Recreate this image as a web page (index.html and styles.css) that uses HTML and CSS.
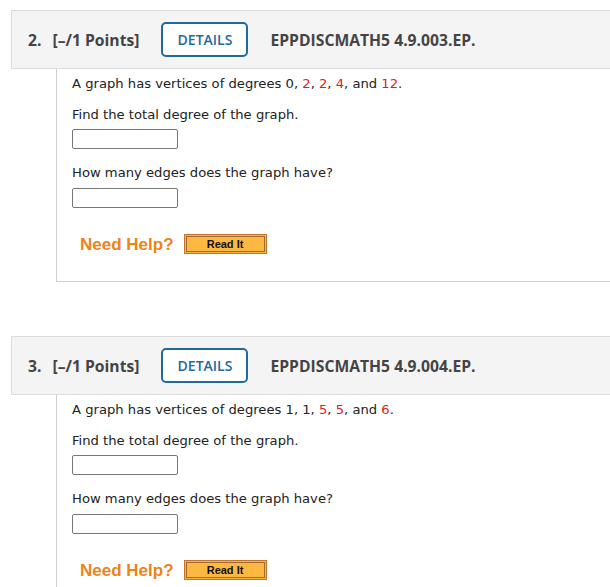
FILE: index.html
```html
<!DOCTYPE html>
<html>
<head>
<meta charset="utf-8">
<link rel="stylesheet" href="styles.css">
</head>
<body>
<div class="page">
  <section class="question">
    <div class="q-header">
      <span class="q-num">2.</span>
      <span class="q-points">[–/1 Points]</span>
      <span class="details-btn">DETAILS</span>
      <span class="q-code">EPPDISCMATH5 4.9.003.EP.</span>
    </div>
    <div class="q-body">
      <p class="q-line first">A graph has vertices of degrees 0, <span class="num">2</span>, <span class="num">2</span>, <span class="num">4</span>, and <span class="num">12</span>.</p>
      <p class="q-line">Find the total degree of the graph.</p>
      <div class="answer"></div>
      <p class="q-line after">How many edges does the graph have?</p>
      <div class="answer last"></div>
      <div class="help-row">
        <span class="need-help">Need Help?</span>
        <span class="read-it"><span class="read-it-inner">Read It</span></span>
      </div>
    </div>
  </section>
  <section class="question">
    <div class="q-header">
      <span class="q-num">3.</span>
      <span class="q-points">[–/1 Points]</span>
      <span class="details-btn">DETAILS</span>
      <span class="q-code">EPPDISCMATH5 4.9.004.EP.</span>
    </div>
    <div class="q-body">
      <p class="q-line first">A graph has vertices of degrees 1, 1, <span class="num">5</span>, <span class="num">5</span>, and <span class="num">6</span>.</p>
      <p class="q-line">Find the total degree of the graph.</p>
      <div class="answer"></div>
      <p class="q-line after">How many edges does the graph have?</p>
      <div class="answer last"></div>
      <div class="help-row">
        <span class="need-help">Need Help?</span>
        <span class="read-it"><span class="read-it-inner">Read It</span></span>
      </div>
    </div>
  </section>
</div>
</body>
</html>
```

FILE: styles.css
```css
html, body {
  margin: 0;
  padding: 0;
  background: #fff;
  overflow: hidden;
}

.page {
  padding: 10px 0 0 11px;
}

.question {
  margin-bottom: 54px;
}

.q-header {
  display: flex;
  align-items: center;
  height: 57px;
  border: 1px solid #dcdcdc;
  border-right: none;
  background: #f4f4f4;
  padding-left: 16px;
  font-family: "Open Sans", "DejaVu Sans", sans-serif;
  font-weight: 700;
  font-size: 15.7px;
  color: #444;
}

.q-num {
  margin-right: 11px;
}

.q-points {
  margin-right: 22px;
}

.details-btn {
  box-sizing: border-box;
  width: 87px;
  height: 35px;
  border: 2px solid #1f6aa0;
  border-radius: 5px;
  display: flex;
  align-items: center;
  justify-content: center;
  color: #1f6aa0;
  font-weight: 600;
  font-size: 14px;
  margin-right: 22px;
  background: #fff;
}

.q-body {
  margin-left: 45px;
  border-left: 1px solid #cfcfcf;
  border-bottom: 1px solid #cfcfcf;
  padding: 5px 0 27px 15px;
  font-family: "DejaVu Sans", Verdana, sans-serif;
  font-size: 13.15px;
  color: #222;
}

.q-line {
  margin: 11px 0 0 0;
  line-height: 20px;
}

.q-line.first {
  margin-top: 0;
}

.q-line.after {
  margin-top: 14px;
}

.num {
  color: #e21b1b;
}

.answer {
  box-sizing: border-box;
  width: 106px;
  height: 20px;
  border: 1px solid #777;
  border-radius: 2px;
  margin-top: 4px;
  background: #fff;
}

.answer.last {
  margin-top: 5px;
}

.help-row {
  display: flex;
  align-items: center;
  margin: 26px 0 0 8px;
  height: 20px;
}

.need-help {
  font-family: "Liberation Sans", Arial, sans-serif;
  font-weight: 700;
  font-size: 17px;
  line-height: 20px;
  color: #ec8417;
  margin-right: 10px;
  position: relative;
  top: 1px;
}

.read-it {
  box-sizing: border-box;
  width: 83px;
  height: 20px;
  border: 1px solid #c2782c;
  background: #fcb23c;
  padding: 1px;
  display: flex;
}

.read-it-inner {
  flex: 1;
  border: 1px solid #a86a2c;
  background: #fdb843;
  display: flex;
  align-items: center;
  justify-content: center;
  font-family: "Liberation Sans", Arial, sans-serif;
  font-weight: 700;
  font-size: 11px;
  color: #111;
}
```
